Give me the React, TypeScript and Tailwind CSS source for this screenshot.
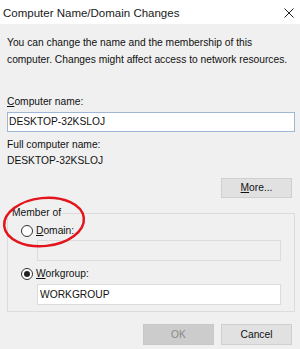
import React from "react";

// accelerator key underline
const U = ({ children }: { children: React.ReactNode }) => (
	<span className="underline underline-offset-[1px]">{children}</span>
);

const Radio = ({ checked }: { checked?: boolean }) => (
	<span className="flex h-[12px] w-[12px] items-center justify-center rounded-full border border-[#333] bg-white">
		{checked && <span className="h-[6px] w-[6px] rounded-full bg-[#222]"></span>}
	</span>
);

export default function App() {
	return (
		<div className="relative h-[349px] w-[300px] overflow-hidden bg-[#f0f0f0] font-['Liberation_Sans',Arial,sans-serif] text-[10.25px] leading-[14px] text-[#111]">
			{/* TITLE BAR */}
			<div className="flex h-[24px] items-center justify-between bg-white pl-[3px] pr-[6px] pt-[1px]">
				<span className="text-[11.5px] text-[#1a1a1a]">Computer Name/Domain Changes</span>
				<svg width="10" height="10" viewBox="0 0 10 10" className="text-[#222]">
					<path d="M0.5 0.5 L9.5 9.5 M9.5 0.5 L0.5 9.5" stroke="currentColor" strokeWidth="1" />
				</svg>
			</div>

			{/* BODY */}
			<div className="flex flex-col px-[7px]">
				<p className="mt-[10px] leading-[17px]">
					You can change the name and the membership of this
					<br />
					computer. Changes might affect access to network resources.
				</p>

				<div className="mt-[27px]">
					<U>C</U>omputer name:
				</div>
				<div className="mt-[3px] flex h-[20px] w-[288px] items-center border border-[#9fb6d6] bg-white pl-[1px]">
					DESKTOP-32KSLOJ
				</div>

				<div className="mt-[6px]">Full computer name:</div>
				<div className="mt-[2px]">DESKTOP-32KSLOJ</div>

				<div className="mt-[10px] flex justify-end pr-[1px]">
					<button className="flex h-[20px] w-[71px] items-center justify-center border border-[#cfcfcf] bg-[#e1e1e1]">
						<span>
							<U>M</U>ore...
						</span>
					</button>
				</div>

				{/* MEMBER OF GROUP */}
				<fieldset className="mt-[8px] h-[106px] w-[288px] border border-[#dcdcdc] px-0 pb-0 pt-[4px]">
					<legend className="ml-[3px] px-[1px]">Member of</legend>
					<div className="flex items-center gap-[3px] pl-[13px]">
						<Radio />
						<span>
							<U>D</U>omain:
						</span>
					</div>
					<div className="ml-[29px] mt-[2px] h-[21px] w-[244px] border border-[#dcdcdc] bg-[#f0f0f0]"></div>
					<div className="mt-[6px] flex items-center gap-[3px] pl-[13px]">
						<Radio checked />
						<span>
							<U>W</U>orkgroup:
						</span>
					</div>
					<div className="ml-[29px] mt-[3px] flex h-[21px] w-[244px] items-center border border-[#dcdcdc] bg-white pl-[2px]">
						WORKGROUP
					</div>
				</fieldset>

				{/* BUTTONS */}
				<div className="mt-[12px] flex justify-end gap-[7px] pr-[1px]">
					<button className="flex h-[21px] w-[71px] items-center justify-center border border-[#c8c8c8] bg-[#cccccc] text-[#8a8a8a]">
						OK
					</button>
					<button className="flex h-[21px] w-[71px] items-center justify-center border border-[#cfcfcf] bg-[#e1e1e1]">
						Cancel
					</button>
				</div>
			</div>

			{/* RED ANNOTATION */}
			<svg className="absolute left-[1px] top-[194px]" width="86" height="56" viewBox="0 0 86 56">
				<ellipse cx="43" cy="28" rx="40" ry="24" fill="none" stroke="#e3141b" strokeWidth="2.5" transform="rotate(-6 43 28)" />
			</svg>
		</div>
	);
}
